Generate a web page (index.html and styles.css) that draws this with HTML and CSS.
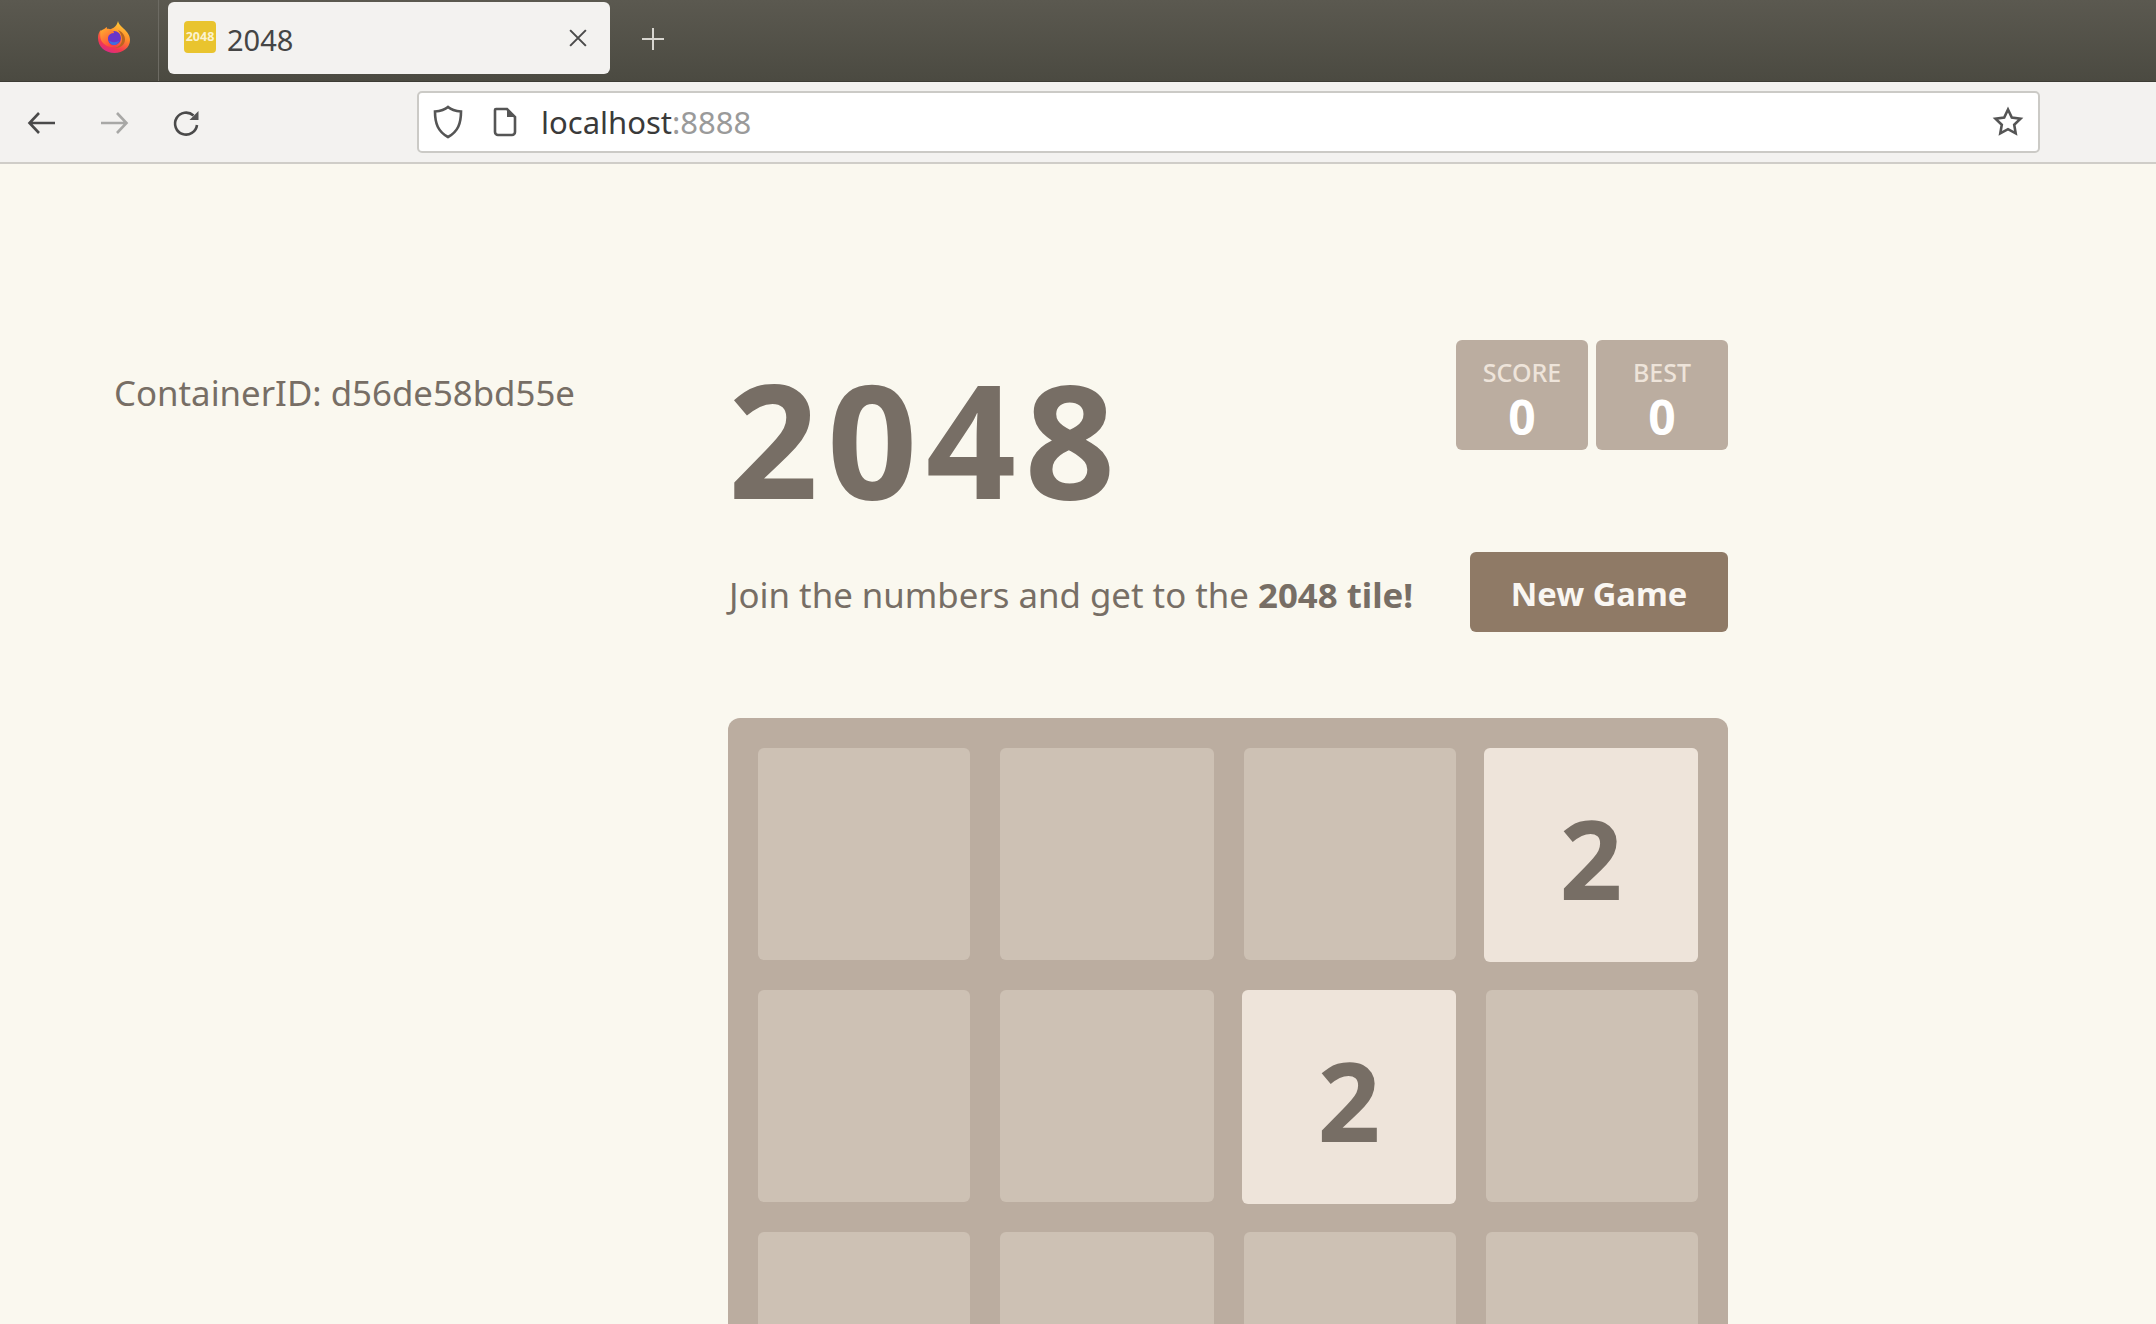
FILE: index.html
```html
<!DOCTYPE html>
<html lang="en">
<head>
<meta charset="utf-8">
<title>2048</title>
<link rel="stylesheet" href="styles.css">
</head>
<body>
<div class="tabbar">
  <div class="ff-slot">
    <svg class="ff-logo" viewBox="0 0 32 32" aria-hidden="true">
      <defs>
        <linearGradient id="ffg" x1="0.8" y1="0" x2="0.35" y2="1">
          <stop offset="0" stop-color="#ffd83a"/>
          <stop offset="0.45" stop-color="#ff8a2b"/>
          <stop offset="0.8" stop-color="#f2384f"/>
          <stop offset="1" stop-color="#d92a86"/>
        </linearGradient>
        <linearGradient id="fft" x1="0" y1="0" x2="0.6" y2="1">
          <stop offset="0" stop-color="#ffb02e"/>
          <stop offset="1" stop-color="#ff4a3a"/>
        </linearGradient>
      </defs>
      <path fill="url(#ffg)" d="M20 0c.5 3 2.500 4.500 5.500 7.500C29.500 11 32 14.500 32 19c0 7.500-7 13-15.500 13C7 32 0 25.500 0 17c0-3 .8-5.500 2.500-8 .4 1.200 1 2 1.800 2.500C5 9 6.500 7 9 6c-.3 1.200 0 2.300.8 3 3-.3 9.200-3 10.200-9z"/>
      <path fill="#b9651f" d="M20 9c4 1.500 7 5 7 9.500 0 5-4.500 8.500-10 8.500 4.500-1.500 7-4.500 7-8.500 0-3.500-1.500-6.500-4-9.500z"/>
      <circle cx="16" cy="17" r="7" fill="#6a35c9"/>
      <path fill="#3f6fe0" d="M10.500 19c2 2.500 7.500 3 11 .5-1 2.800-3.200 4.500-5.500 4.500-2.500 0-4.700-2-5.500-5z"/>
      <path fill="url(#fft)" d="M2.500 10c3.500-2.500 9-3 12-.5 1 .8 1.500 1.500 1.500 2.500-3 0-5.500 1.500-6 4.500-.5 4 2 8 6.500 9.500-6.500.8-13-3-14-9-.4-2.500-.3-4.500 0-7z"/>
    </svg>
  </div>
  <div class="tab">
    <span class="favicon">2048</span>
    <span class="tab-title">2048</span>
    <svg class="tab-close" viewBox="0 0 16 16" aria-hidden="true"><path d="M1 1l14 14M15 1L1 15"/></svg>
  </div>
  <svg class="new-tab" viewBox="0 0 24 24" aria-hidden="true"><path d="M12 1v22M1 12h22"/></svg>
</div>
<div class="toolbar">
  <svg class="nav back" viewBox="0 0 30 24" aria-hidden="true"><path d="M28 12H3M12 2L2.500 12 12 22"/></svg>
  <svg class="nav forward" viewBox="0 0 30 24" aria-hidden="true"><path d="M2 12h25M18 2l9.500 10L18 22"/></svg>
  <svg class="nav reload" viewBox="0 0 30 30" aria-hidden="true"><path d="M25 17a11 11 0 1 1-3.500-9.500"/><path class="solid" d="M26.500 3v9h-9z"/></svg>
  <div class="urlbar">
    <svg class="shield" viewBox="0 0 30 34" aria-hidden="true"><path d="M15 2c3 2.500 8 4 13 4.500 0 12-3 20-13 25.500C5 26.500 2 18.500 2 6.500 7 6 12 4.500 15 2z"/></svg>
    <svg class="doc" viewBox="0 0 26 30" aria-hidden="true"><path d="M4 2h11l8 8v15a3 3 0 0 1-3 3H6a3 3 0 0 1-3-3V3a1 1 0 0 1 1-1z"/><path class="solid" d="M15 2l8 8h-8z"/></svg>
    <span class="url">localhost<span class="port">:8888</span></span>
    <svg class="star" viewBox="0 0 32 32" aria-hidden="true"><path d="M16 3.500l3.800 8 8.700 1.200-6.300 6 1.500 8.700L16 23.200l-7.700 4.200 1.500-8.700-6.300-6 8.700-1.200z"/></svg>
  </div>
</div>
<main class="page">
  <aside class="side">ContainerID: d56de58bd55e</aside>
  <div class="game">
    <div class="heading">
      <h1 class="title">2048</h1>
      <div class="scores">
        <div class="score-box"><span class="score-label">SCORE</span><span class="score-value">0</span></div>
        <div class="score-box"><span class="score-label">BEST</span><span class="score-value">0</span></div>
      </div>
    </div>
    <div class="above">
      <p class="intro">Join the numbers and get to the <strong>2048 tile!</strong></p>
      <a class="restart">New Game</a>
    </div>
    <div class="board">
      <div class="cell"></div><div class="cell"></div><div class="cell"></div><div class="cell"><div class="tile">2</div></div>
      <div class="cell"></div><div class="cell"></div><div class="cell"><div class="tile">2</div></div><div class="cell"></div>
      <div class="cell"></div><div class="cell"></div><div class="cell"></div><div class="cell"></div>
      <div class="cell"></div><div class="cell"></div><div class="cell"></div><div class="cell"></div>
    </div>
  </div>
</main>
</body>
</html>
```
FILE: styles.css
```css
html, body {
  margin: 0;
  height: 100%;
  overflow: hidden;
}
body {
  display: flex;
  flex-direction: column;
  background: #faf8ef;
  color: #776e65;
  font-family: "Noto Sans", sans-serif;
}
.tabbar {
  flex: none;
  height: 82px;
  box-sizing: border-box;
  display: flex;
  align-items: flex-start;
  background: linear-gradient(#5b5950, #4b4a41);
  border-bottom: 1px solid #3d3c35;
}
.ff-slot {
  width: 159px;
  height: 81px;
  box-sizing: border-box;
  display: flex;
  align-items: center;
  padding-left: 98px;
  border-right: 1px solid #6d6b63;
  margin-right: 9px;
}
.ff-logo { width: 32px; height: 32px; margin-top: -8px; }
.tab {
  margin-top: 2px;
  width: 442px;
  height: 72px;
  box-sizing: border-box;
  display: flex;
  align-items: center;
  padding: 0 16px;
  background: #f3f2f0;
  border-radius: 6px;
  color: #454545;
  font-size: 29px;
}
.favicon {
  width: 32px;
  height: 32px;
  margin: -2px 11px 0 0;
  background: #e9c42e;
  border-radius: 4px;
  color: #fbf3d0;
  font-size: 12.500px;
  font-weight: 700;
  text-align: center;
  line-height: 32px;
}
.tab-title { flex: 1; line-height: 1; margin-top: 2px; }
.tab-close {
  width: 18px;
  height: 18px;
  margin-right: 7px;
  fill: none;
  stroke: #4a4a4a;
  stroke-width: 1.800;
}
.new-tab {
  width: 24px;
  height: 24px;
  margin: 27px 0 0 31px;
  fill: none;
  stroke: #d8d6d0;
  stroke-width: 2;
}
.toolbar {
  flex: none;
  height: 82px;
  box-sizing: border-box;
  display: flex;
  align-items: center;
  padding-left: 27px;
  background: #f3f2f0;
  border-bottom: 2px solid #cfcdc8;
}
.nav {
  fill: none;
  stroke: #4a4a4a;
  stroke-width: 2.600;
}
.back, .forward { width: 30px; height: 24px; margin-right: 42px; margin-top: 1px; }
.forward { stroke: #a8a8a6; margin-right: 43px; }
.reload { width: 30px; height: 30px; margin-right: 215px; margin-top: 1px; }
.solid { fill: #555; stroke: none; }
.urlbar {
  width: 1623px;
  height: 62px;
  box-sizing: border-box;
  display: flex;
  align-items: center;
  padding: 0 14px;
  background: #fff;
  border: 2px solid #cbcac6;
  border-radius: 5px;
  font-size: 31px;
  color: #3a3a3a;
}
.shield, .doc, .star {
  fill: none;
  stroke: #555;
  stroke-width: 2.600;
}
.shield { width: 30px; height: 34px; margin-right: 29px; }
.doc { width: 26px; height: 30px; margin-right: 23px; }
.url { flex: 1; }
.port { color: #9a9a9a; }
.star { width: 32px; height: 32px; }
.page {
  flex: 1;
  min-height: 0;
  display: flex;
  align-items: flex-start;
  padding: 176px 0 0 114px;
}
.side {
  width: 614px;
  padding-top: 30px;
  font-size: 34.800px;
  line-height: 46px;
}
.game { width: 1000px; }
.heading {
  height: 212px;
  display: flex;
  justify-content: space-between;
  align-items: flex-start;
}
.title {
  margin: 0;
  font-size: 158px;
  line-height: 196px;
  letter-spacing: 8.500px;
  font-weight: 700;
}
.scores { display: flex; gap: 8px; }
.score-box {
  width: 132px;
  height: 110px;
  display: flex;
  flex-direction: column;
  align-items: center;
  background: #bbada0;
  border-radius: 6px;
  padding-top: 17px;
  box-sizing: border-box;
}
.score-label { color: #eee4da; font-size: 25px; line-height: 30px; font-weight: 500; }
.score-value { color: #fff; font-size: 48px; line-height: 52px; margin-top: 4px; font-weight: 700; }
.above {
  height: 80px;
  display: flex;
  justify-content: space-between;
  align-items: center;
}
.intro { margin: 4px 0 0 1px; font-size: 34.800px; }
.restart {
  width: 258px;
  height: 80px;
  display: flex;
  align-items: center;
  justify-content: center;
  padding-top: 3px;
  box-sizing: border-box;
  background: #8f7a66;
  color: #f9f6f2;
  border-radius: 6px;
  font-size: 32.700px;
  font-weight: 700;
}
.board {
  margin-top: 86px;
  height: 606px;
  overflow: hidden;
  box-sizing: border-box;
  padding: 30px;
  display: grid;
  grid-template-columns: 212px 214px 212px 212px;
  grid-template-rows: repeat(4, 212px);
  gap: 30px;
  background: #bbada0;
  border-radius: 12px 12px 0 0;
}
.cell {
  position: relative;
  background: #cdc1b4;
  border-radius: 6px;
}
.tile {
  position: absolute;
  inset: 0 0 -2px -2px;
  display: flex;
  align-items: center;
  justify-content: center;
  padding-top: 4px;
  box-sizing: border-box;
  background: #eee4da;
  border-radius: 6px;
  font-size: 110px;
  font-weight: 700;
}
```
